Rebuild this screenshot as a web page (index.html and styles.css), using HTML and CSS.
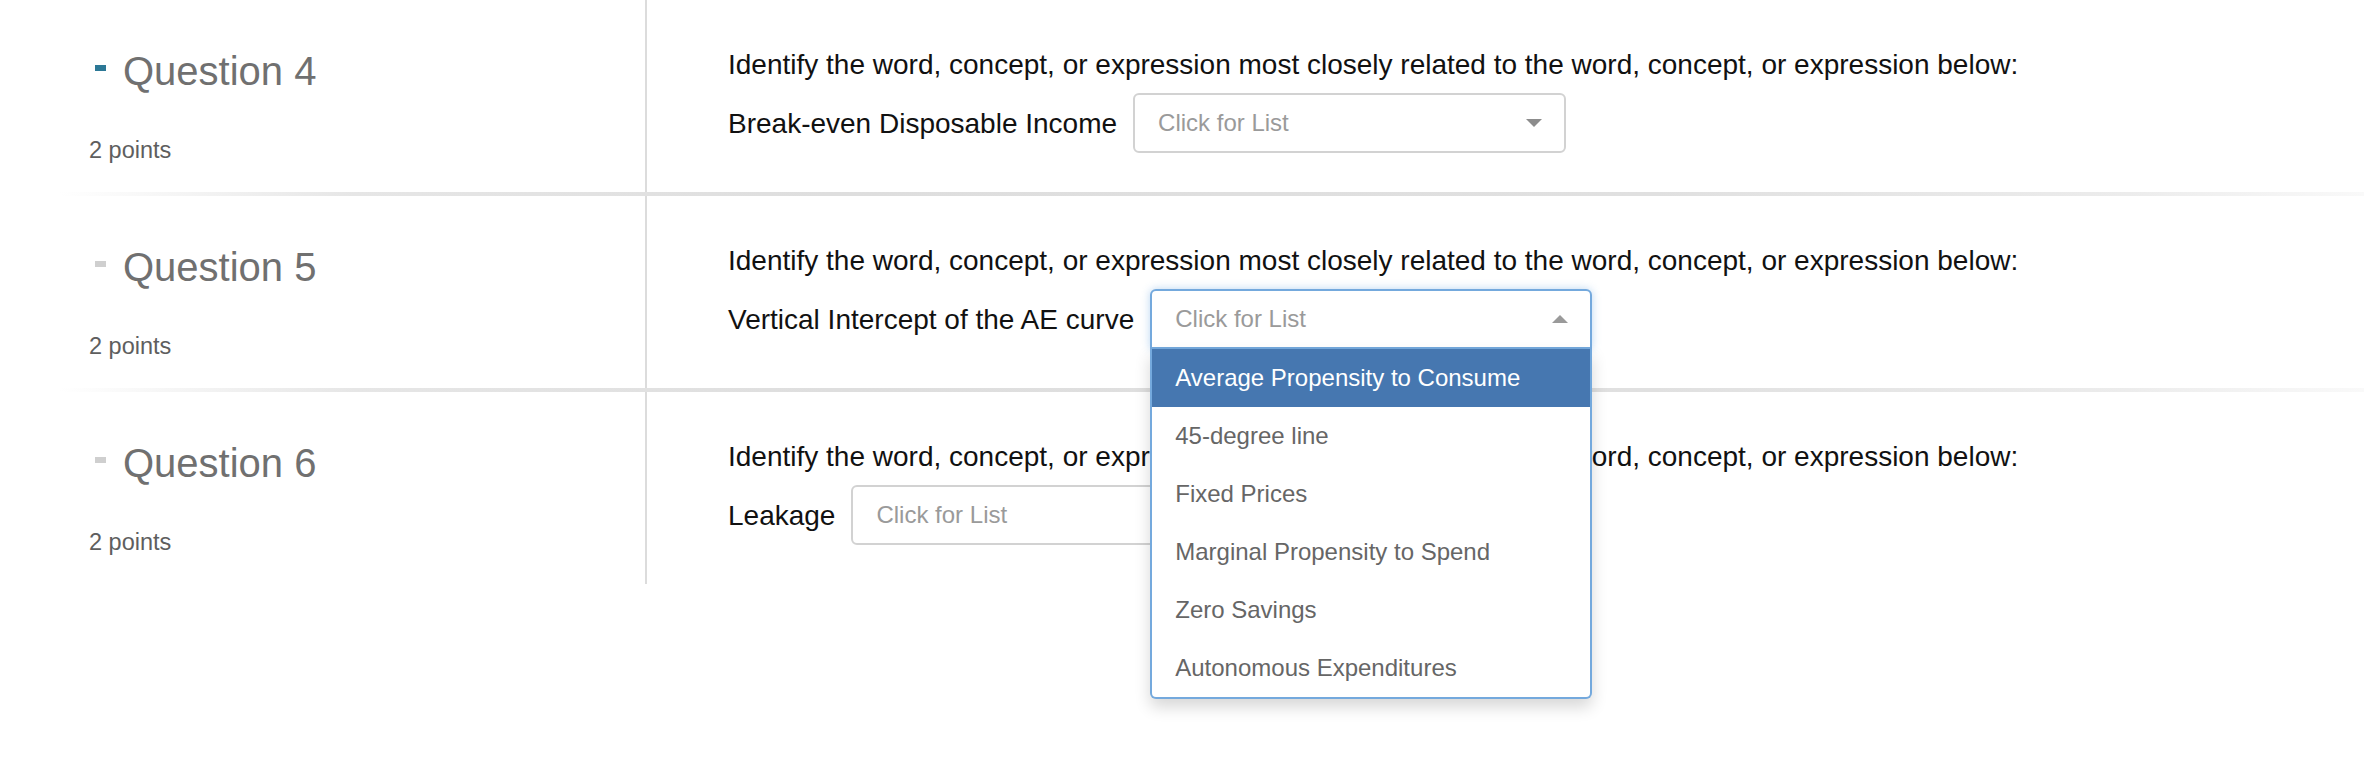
FILE: index.html
```html
<!DOCTYPE html>
<html lang="en">
<head>
<meta charset="utf-8">
<title>Questions</title>
<link rel="stylesheet" href="styles.css">
</head>
<body>
<div class="questions">
  <div class="q">
    <div class="q-side">
      <h2 class="q-title"><span class="dash dash-active"></span>Question 4</h2>
      <div class="points">2 points</div>
    </div>
    <div class="q-body">
      <p class="prompt">Identify the word, concept, or expression most closely related to the word, concept, or expression below:</p>
      <div class="answer">
        <span class="label">Break-even Disposable Income</span>
        <div class="select select-w1">
          <span class="placeholder">Click for List</span>
          <span class="arrow arrow-down"></span>
        </div>
      </div>
    </div>
  </div>
  <div class="sep"></div>
  <div class="q q-front">
    <div class="q-side">
      <h2 class="q-title"><span class="dash"></span>Question 5</h2>
      <div class="points">2 points</div>
    </div>
    <div class="q-body">
      <p class="prompt">Identify the word, concept, or expression most closely related to the word, concept, or expression below:</p>
      <div class="answer">
        <span class="label">Vertical Intercept of the AE curve</span>
        <div class="select select-w2 select-open">
          <span class="placeholder">Click for List</span>
          <span class="arrow arrow-up"></span>
          <ul class="menu">
            <li class="opt opt-active">Average Propensity to Consume</li>
            <li class="opt">45-degree line</li>
            <li class="opt">Fixed Prices</li>
            <li class="opt">Marginal Propensity to Spend</li>
            <li class="opt">Zero Savings</li>
            <li class="opt">Autonomous Expenditures</li>
          </ul>
        </div>
      </div>
    </div>
  </div>
  <div class="sep"></div>
  <div class="q">
    <div class="q-side">
      <h2 class="q-title"><span class="dash"></span>Question 6</h2>
      <div class="points">2 points</div>
    </div>
    <div class="q-body">
      <p class="prompt">Identify the word, concept, or expression most closely related to the word, concept, or expression below:</p>
      <div class="answer">
        <span class="label">Leakage</span>
        <div class="select select-w1">
          <span class="placeholder">Click for List</span>
          <span class="arrow arrow-down"></span>
        </div>
      </div>
    </div>
  </div>
</div>
</body>
</html>
```
FILE: styles.css
```css
* { box-sizing: border-box; }

html, body {
  margin: 0;
  padding: 0;
  background: #fff;
  font-family: "Liberation Sans", Arial, sans-serif;
}

body { min-height: 782px; }

.questions {
  display: flex;
  flex-direction: column;
  padding-bottom: 198px;
}

.q {
  display: flex;
  height: 192px;
}

.q-front {
  position: relative;
  z-index: 3;
}

.q-side {
  width: 647px;
  flex: none;
  border-right: 2px solid #dcdcdc;
  padding: 51px 0 0 89px;
}

.q-title {
  margin: 0;
  display: flex;
  align-items: center;
  font-size: 40px;
  line-height: 40px;
  font-weight: normal;
  color: #707070;
}

.dash {
  display: inline-block;
  width: 11px;
  height: 6px;
  margin: 0 17px 6px 6px;
  background: #cfcfcf;
}

.dash-active { background: #2c7896; }

.points {
  margin-top: 48px;
  font-size: 23.5px;
  line-height: 22px;
  color: #5e5e5e;
}

.q-body {
  flex: 1;
  padding: 51px 0 0 81px;
}

.prompt {
  margin: 0;
  font-size: 28px;
  line-height: 28px;
  color: #111;
}

.answer {
  margin-top: 14px;
  display: flex;
  align-items: center;
  gap: 16px;
}

.label {
  font-size: 28px;
  line-height: 28px;
  color: #111;
  padding-top: 2px;
}

.select {
  position: relative;
  height: 60px;
  display: flex;
  align-items: center;
  justify-content: space-between;
  padding: 0 22px 0 23px;
  border: 2px solid #d2d2d2;
  border-radius: 6px;
  background: #fff;
}

.select-w1 { width: 433px; }
.select-w2 { width: 442px; }

.select-open {
  z-index: 2;
  border-color: #74a9dd;
  border-radius: 6px 6px 0 0;
  box-shadow: 0 0 8px rgba(102, 165, 225, 0.45);
}

.placeholder {
  font-size: 24px;
  color: #9a9a9a;
}

.arrow {
  width: 0;
  height: 0;
  border-left: 8px solid transparent;
  border-right: 8px solid transparent;
}

.arrow-down { border-top: 8px solid #8c8c8c; }
.arrow-up { border-bottom: 8px solid #9a9a9a; }

.menu {
  position: absolute;
  top: 58px;
  left: -2px;
  right: -2px;
  margin: 0;
  padding: 0;
  list-style: none;
  background: #fff;
  border: 2px solid #74a9dd;
  border-top: none;
  border-radius: 0 0 6px 6px;
  box-shadow: 0 8px 16px rgba(0, 0, 0, 0.16);
}

.opt {
  height: 58px;
  display: flex;
  align-items: center;
  padding-left: 23px;
  font-size: 24px;
  color: #666;
}

.opt-active {
  background: #4677b0;
  color: #fff;
}

.sep {
  height: 4px;
  background: linear-gradient(to right, #ffffff 2.5%, #e6e6e6 15%, #dedede 35%, #e0e0e0 70%, #ececec 90%, #f9f9f9 100%);
}
```
